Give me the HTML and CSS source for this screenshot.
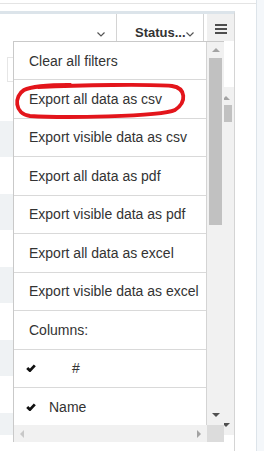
FILE: index.html
```html
<!DOCTYPE html>
<html lang="en">

<head>
  <meta charset="UTF-8">
  <meta name="viewport" content="width=device-width, initial-scale=1.0">
  <title>Grid menu</title>
  <link rel="stylesheet" href="styles.css">
</head>

<body>

  <div class="page">
    <main class="panel">
      <div class="panel-top"></div>

      <div class="grid">
        <div class="grid-header">
          <div class="hcell hcell-name">
            <svg class="chev" width="8" height="5" viewBox="0 0 8 5"><path d="M0.5 0.5 L4 4 L7.5 0.5" /></svg>
          </div>
          <div class="hcell hcell-status">
            <span>Status...</span>
            <svg class="chev" width="8" height="5" viewBox="0 0 8 5"><path d="M0.5 0.5 L4 4 L7.5 0.5" /></svg>
          </div>
          <div class="hcell hcell-gap"></div>
          <button class="menu-btn" aria-label="Grid menu"><span></span><span></span><span></span></button>
        </div>

        <div class="grid-filters">
          <input class="filter-input" type="text">
        </div>

        <div class="grid-body">
          <div class="rows">
            <div class="row"></div>
            <div class="row"></div>
            <div class="row"></div>
            <div class="row"></div>
            <div class="row"></div>
            <div class="row"></div>
            <div class="row"></div>
            <div class="row"></div>
            <div class="row"></div>
            <div class="row"></div>
          </div>
          <div class="vscroll grid-vscroll">
            <span class="arrow arrow-up"></span>
            <span class="thumb"></span>
            <span class="spacer"></span>
            <span class="arrow arrow-down"></span>
          </div>
        </div>
      </div>

      <!-- grid menu, opened over the grid -->
      <div class="grid-menu">
        <ul class="menu-list">
          <li>Clear all filters</li>
          <li>Export all data as csv</li>
          <li>Export visible data as csv</li>
          <li>Export all data as pdf</li>
          <li>Export visible data as pdf</li>
          <li>Export all data as excel</li>
          <li>Export visible data as excel</li>
          <li>Columns:</li>
          <li class="check-item">
            <svg class="check" width="10" height="8" viewBox="0 0 10 8"><path d="M1.2 4 L3.9 6.6 L8.8 1.4" /></svg>
            <span class="col-label col-label-hash">#</span>
          </li>
          <li class="check-item">
            <svg class="check" width="10" height="8" viewBox="0 0 10 8"><path d="M1.2 4 L3.9 6.6 L8.8 1.4" /></svg>
            <span class="col-label">Name</span>
          </li>
        </ul>
        <div class="vscroll menu-vscroll">
          <span class="arrow arrow-up"></span>
          <span class="thumb"></span>
          <span class="spacer"></span>
          <span class="arrow arrow-down"></span>
        </div>
        <div class="menu-hscroll">
          <span class="arrow arrow-left"></span>
          <span class="arrow arrow-right"></span>
        </div>
        <div class="menu-corner"></div>
      </div>
    </main>
    <aside class="side"></aside>
  </div>

  <svg class="annotation" width="264" height="451" viewBox="0 0 264 451">
    <path d="M38 87 C80 85 150 84 172 86 C186 88 187 102 175 110 C160 117 60 118 30 116 C14 114 14 96 24 90 C32 86 50 85 70 85" />
  </svg>

</body>

</html>
```

FILE: styles.css
```css
body {
  margin: 0;
  font-family: 'Liberation Sans', Arial, sans-serif;
  color: #333;
  background: #fff;
}

.page {
  display: flex;
  height: 100vh;
  overflow: hidden;
}

.panel {
  position: relative;
  width: 256px;
  border-right: 1px solid #dde4ea;
  display: flex;
  flex-direction: column;
}

.side {
  flex: 1;
  background: #f4f7fa;
}

.panel-top {
  height: 3px;
  border-bottom: 1px solid #e4e4e4;
  margin-bottom: 7px;
}

.grid {
  width: 234px;
  flex: 1;
  border-top: 3px solid #dce4ea;
  border-right: 1px solid #d4d4d4;
  display: flex;
  flex-direction: column;
}

.grid-header {
  display: flex;
  height: 27px;
}

.hcell {
  display: flex;
  box-sizing: border-box;
}

.hcell-name {
  width: 117px;
  border-right: 1px solid #d4d4d4;
  justify-content: flex-end;
  padding: 18px 11px 0 0;
}

.hcell-status {
  width: 87px;
  border-right: 1px solid #d4d4d4;
  padding: 11px 0 0 18px;
  font-size: 13px;
  font-weight: bold;
  line-height: 15px;
  white-space: nowrap;
}

.hcell-status .chev {
  margin: 7px 0 0 0;
}

.hcell-gap {
  width: 3px;
}

.chev path {
  fill: none;
  stroke: #555;
  stroke-width: 1.2;
}

.menu-btn {
  width: 27px;
  border: none;
  padding: 10px 0 0;
  background: #f0f0f0;
  display: flex;
  flex-direction: column;
  align-items: center;
  gap: 2px;
}

.menu-btn span {
  width: 12px;
  height: 2px;
  background: #4d4d4d;
}

.grid-filters {
  height: 43px;
  padding: 16px 0 0 7px;
  box-sizing: border-box;
}

.filter-input {
  display: block;
  width: 100px;
  height: 25px;
  margin: 0;
  box-sizing: border-box;
  border: 1px solid #e6e6e6;
}

.grid-body {
  height: 351px;
  display: flex;
}

.rows {
  flex: 1;
  overflow: hidden;
}

.row {
  height: 36.5px;
}

.row:nth-child(even) {
  background: #eff2f4;
}

/* scrollbars */
.vscroll {
  width: 17px;
  background: #f1f1f1;
  display: flex;
  flex-direction: column;
  align-items: center;
}

.vscroll .spacer {
  flex: 1;
}

.thumb {
  width: 13px;
  background: #c1c1c1;
}

.arrow {
  width: 0;
  height: 0;
}

.arrow-up {
  border-left: 4px solid transparent;
  border-right: 4px solid transparent;
  border-bottom: 4px solid #a3a3a3;
}

.arrow-down {
  border-left: 4px solid transparent;
  border-right: 4px solid transparent;
  border-top: 4px solid #505050;
}

.arrow-left {
  border-top: 4px solid transparent;
  border-bottom: 4px solid transparent;
  border-right: 4px solid #c8c8c8;
}

.arrow-right {
  border-top: 4px solid transparent;
  border-bottom: 4px solid transparent;
  border-left: 4px solid #a3a3a3;
}

.grid-vscroll {
  margin-top: 3px;
}

.grid-vscroll .arrow-up {
  margin-top: 9px;
}

.grid-vscroll .thumb {
  height: 17px;
  margin-top: 5px;
}

.grid-vscroll .arrow-down {
  margin-bottom: 8px;
}

/* grid menu */
.grid-menu {
  position: absolute;
  left: 13px;
  top: 41px;
  width: 211px;
  height: 401px;
  box-sizing: border-box;
  border-left: 1px solid #c9c9c9;
  border-top: 1px solid #c9c9c9;
  background: #fff;
  display: grid;
  grid-template-columns: 193px 17px;
  grid-template-rows: 383px 17px;
}

.menu-list {
  list-style: none;
  margin: 0;
  padding: 0;
  overflow: hidden;
  border-right: 1px solid #d4d4d4;
  font-size: 14px;
}

.menu-list li {
  height: 37.5px;
  border-bottom: 1px solid #d9d9d9;
  padding-left: 15px;
  display: flex;
  align-items: center;
  white-space: nowrap;
}

.menu-list li:first-child {
  height: 37px;
}

.menu-list li.check-item {
  padding-left: 12px;
}

.check path {
  fill: none;
  stroke: #111;
  stroke-width: 2.8;
}

.col-label {
  margin-left: 13px;
}

.col-label-hash {
  margin-left: 36px;
}

.menu-vscroll .arrow-up {
  margin-top: 6px;
}

.menu-vscroll .thumb {
  height: 167px;
  margin-top: 6px;
}

.menu-vscroll .arrow-down {
  margin-bottom: 8px;
}

.menu-hscroll {
  background: #f1f1f1;
  display: flex;
  align-items: center;
  justify-content: space-between;
  padding: 0 6px;
}

.menu-corner {
  background: #dcdcdc;
}

.annotation {
  position: absolute;
  top: 0;
  left: 0;
  pointer-events: none;
}

.annotation path {
  fill: none;
  stroke: #e3151b;
  stroke-width: 3.8;
  stroke-linecap: round;
}
```
